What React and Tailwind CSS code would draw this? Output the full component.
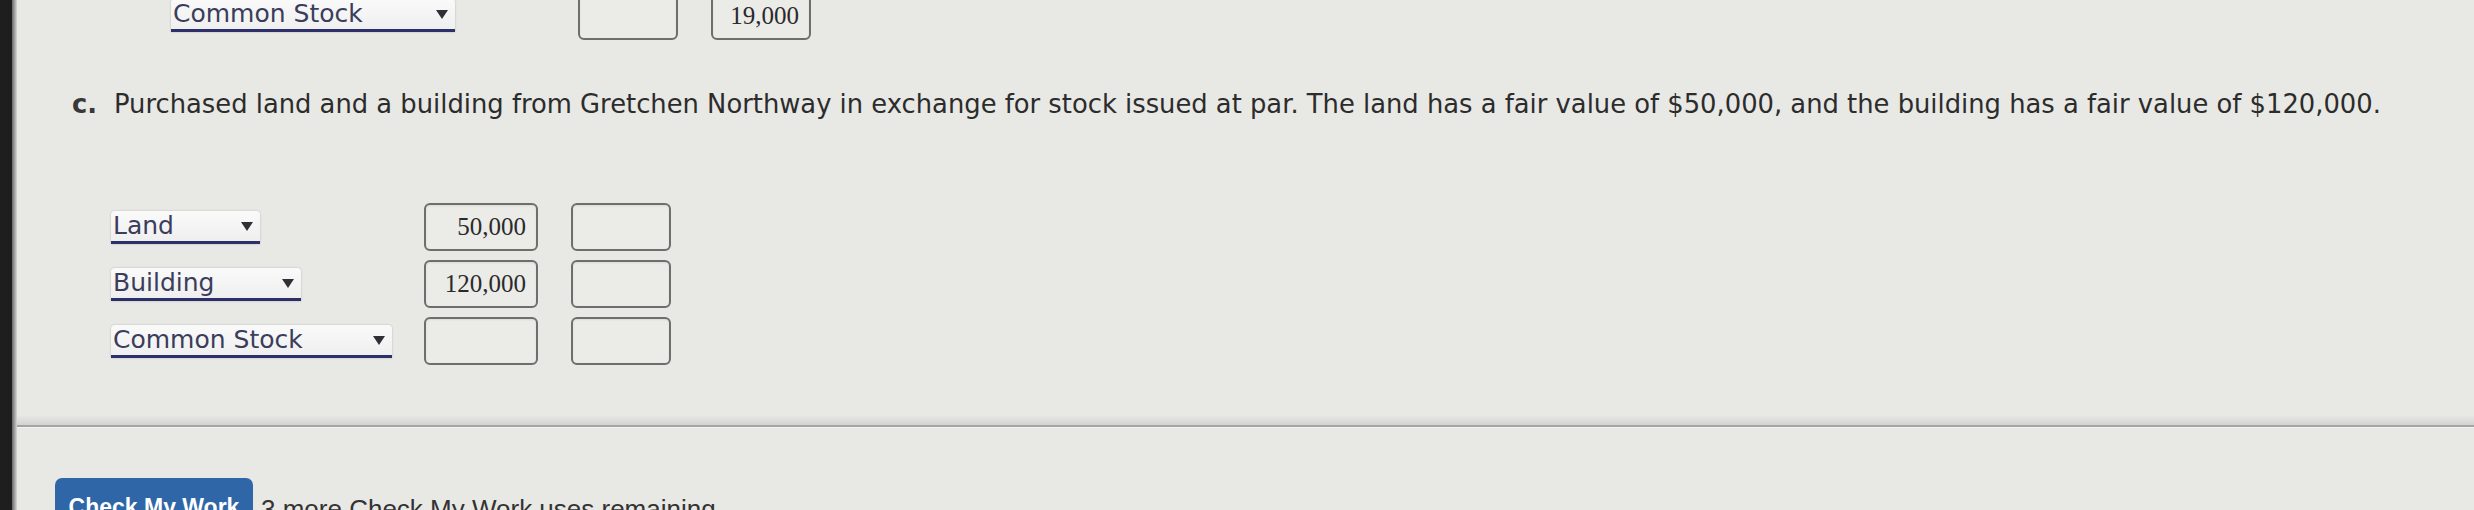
import React from "react";

const sans = { fontFamily: '"DejaVu Sans", Verdana, sans-serif' };

function Dropdown({ label, width }) {
  return (
    <div
      className={`relative flex h-[33px] items-end rounded-t-[4px] border-b-[3px] border-[#2d2f6b] bg-gradient-to-b from-[#fafafa] to-[#efefef] shadow-[0_0_2px_rgba(0,0,0,0.25)] ${width}`}
      style={sans}
    >
      <span className="block whitespace-nowrap pl-[2px] text-[25px] leading-[30px] text-[#3b3d5c]">{label}</span>
      <svg className="absolute right-[7px] top-[11px]" width="12" height="9" viewBox="0 0 12 9">
        <path d="M0 0 H12 L6 9 Z" fill="#2f2f35" />
      </svg>
    </div>
  );
}

function Box({ value, width = "w-[114px]" }) {
  return (
    <div
      className={`flex h-[48px] items-center justify-end rounded-[6px] border-2 border-[#6e6e6c] bg-[#ebebe8] pr-[10px] text-[25px] text-[#2a2a2a] shadow-[inset_0_1px_2px_rgba(0,0,0,0.08)] ${width}`}
      style={{ fontFamily: '"Liberation Serif", "Times New Roman", serif' }}
    >
      {value}
    </div>
  );
}

function EntryRow({ label, selectWidth, debit, credit }) {
  return (
    <div className="flex items-center">
      <div className="w-[313px]">
        <Dropdown label={label} width={selectWidth} />
      </div>
      <div className="flex gap-[33px]">
        <Box value={debit} />
        <Box value={credit} width="w-[100px]" />
      </div>
    </div>
  );
}

export default function App() {
  return (
    <div className="flex h-[510px] w-[2474px] overflow-hidden bg-[#e8e8e5]">
      <div className="flex w-[17px] shrink-0">
        <div className="w-[12px] bg-[#1e1e1e]" />
        <div className="w-[5px] bg-gradient-to-r from-[#6a6a6a] to-[#d8d8d5]" />
      </div>

      <div className="flex min-w-0 flex-1 flex-col">
        {/* previous entry, cut off at the top */}
        <div className="-mt-[8px] flex h-[47px] items-center pl-[154px]">
          <div className="w-[407px]">
            <Dropdown label="Common Stock" width="w-[284px]" />
          </div>
          <div className="flex gap-[33px]">
            <Box value="" width="w-[100px]" />
            <Box value="19,000" width="w-[100px]" />
          </div>
        </div>

        <p className="mt-[50px] flex pl-[55px] text-[25.8px] leading-[31px] text-[#2c2c2c]" style={sans}>
          <span className="w-[42px] shrink-0 font-bold text-[#383838]">c.</span>
          <span>
            Purchased land and a building from Gretchen Northway in exchange for stock issued at par. The land
            has a fair value of $50,000, and the building has a fair value of $120,000.
          </span>
        </p>

        <div className="mt-[83px] flex flex-col gap-[9px] pl-[94px]">
          <EntryRow label="Land" selectWidth="w-[149px]" debit="50,000" credit="" />
          <EntryRow label="Building" selectWidth="w-[190px]" debit="120,000" credit="" />
          <EntryRow label="Common Stock" selectWidth="w-[281px]" debit="" credit="" />
        </div>

        <div className="mt-[50px]">
          <div className="h-[10px] bg-gradient-to-b from-transparent to-[#d3d3d0]" />
          <div className="h-[2px] bg-[#a4a4a2]" />
          <div className="h-[1px] bg-[#f4f4f2]" />
        </div>

        <div className="mt-[50px] flex items-start gap-[8px] pl-[38px]">
          <div
            className="flex h-[60px] w-[198px] shrink-0 justify-center rounded-t-[7px] bg-[#2f66a7] pt-[12px] text-[23px] font-bold text-white"
            style={{ fontFamily: '"Liberation Sans", Arial, sans-serif' }}
          >
            Check My Work
          </div>
          <span
            className="pt-[12px] text-[26px] text-[#333333]"
            style={{ fontFamily: '"Liberation Sans", Arial, sans-serif' }}
          >
            3 more Check My Work uses remaining.
          </span>
        </div>
      </div>
    </div>
  );
}
